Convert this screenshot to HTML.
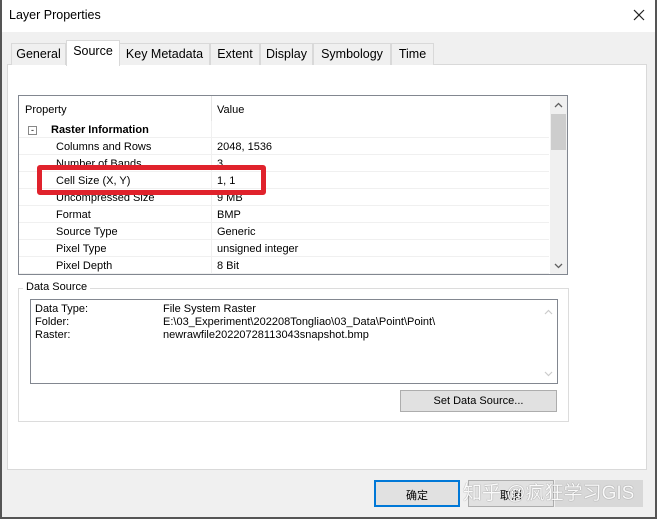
<!DOCTYPE html>
<html><head><meta charset="utf-8"><style>
*{box-sizing:border-box;margin:0;padding:0}
body{width:657px;height:519px;background:#f0f0f0;font-family:"Liberation Sans","Noto Sans CJK SC",sans-serif;font-size:11px;color:#000;position:relative;overflow:hidden}
.a{position:absolute}
.tab{position:absolute;top:43px;height:22px;border:1px solid #d9d9d9;border-bottom:none;background:#f0f0f0;font-size:12.5px;padding-top:3px;text-align:center}
.row{position:absolute;left:0;width:530px;height:17px;border-bottom:1px solid #f0f0f0}
.row span{position:absolute;top:3px}
</style></head><body>
<div class="a" style="left:0;top:0;width:657px;height:32px;background:#fff"></div>
<div class="a" style="left:9px;top:8px;font-size:12.5px">Layer Properties</div>
<svg class="a" style="left:633px;top:9px" width="12" height="12"><path d="M1 1L11 11M11 1L1 11" stroke="#222" stroke-width="1.2"/></svg>
<div class="a" style="left:0;top:0;width:2px;height:519px;background:#555"></div>
<div class="a" style="left:655px;top:0;width:2px;height:519px;background:#555"></div>
<div class="a" style="left:0;top:517px;width:657px;height:2px;background:#555"></div>

<div class="a" style="left:7px;top:64px;width:640px;height:406px;background:#fff;border:1px solid #d9d9d9"></div>
<div class="tab" style="left:11px;width:55px">General</div>
<div class="tab" style="left:119px;width:91px">Key Metadata</div>
<div class="tab" style="left:210px;width:50px">Extent</div>
<div class="tab" style="left:260px;width:53px">Display</div>
<div class="tab" style="left:313px;width:78px">Symbology</div>
<div class="tab" style="left:391px;width:43px">Time</div>
<div class="tab" style="left:66px;top:40px;width:54px;height:26px;background:#fff;border-color:#d9d9d9">Source</div>

<div class="a" style="left:18px;top:95px;width:550px;height:180px;border:1px solid #828790;background:#fff;overflow:hidden">
 <div class="a" style="left:192px;top:0;width:1px;height:25px;background:#e5e5e5"></div>
 <div class="a" style="left:6px;top:8px">Property</div>
 <div class="a" style="left:198px;top:8px">Value</div>
 <div class="a" style="left:9px;top:30px;width:9px;height:9px;border:1px solid #888;font-size:9px;line-height:6px;text-align:center">-</div>
 <div class="a" style="left:32px;top:28px;font-weight:bold">Raster Information</div>
 <div class="a" style="left:192px;top:25px;width:1px;height:155px;background:#f0f0f0"></div>
 <div class="row" style="top:25px"></div>
 <div class="row" style="top:42px"><span style="left:37px">Columns and Rows</span><span style="left:198px">2048, 1536</span></div>
 <div class="row" style="top:59px"><span style="left:37px">Number of Bands</span><span style="left:198px">3</span></div>
 <div class="row" style="top:76px"><span style="left:37px">Cell Size (X, Y)</span><span style="left:198px">1, 1</span></div>
 <div class="row" style="top:93px"><span style="left:37px">Uncompressed Size</span><span style="left:198px">9 MB</span></div>
 <div class="row" style="top:110px"><span style="left:37px">Format</span><span style="left:198px">BMP</span></div>
 <div class="row" style="top:127px"><span style="left:37px">Source Type</span><span style="left:198px">Generic</span></div>
 <div class="row" style="top:144px"><span style="left:37px">Pixel Type</span><span style="left:198px">unsigned integer</span></div>
 <div class="row" style="top:161px"><span style="left:37px">Pixel Depth</span><span style="left:198px">8 Bit</span></div>
 <div class="a" style="left:531px;top:0;width:17px;height:178px;background:#f0f0f0"></div>
 <div class="a" style="left:532px;top:18px;width:15px;height:36px;background:#cdcdcd"></div>
 <svg class="a" style="left:535px;top:6px" width="9" height="6"><path d="M1 5L4.5 1.5L8 5" stroke="#606060" stroke-width="1.3" fill="none"/></svg>
 <svg class="a" style="left:535px;top:167px" width="9" height="6"><path d="M1 1L4.5 4.5L8 1" stroke="#606060" stroke-width="1.3" fill="none"/></svg>
</div>
<div class="a" style="left:37px;top:165px;width:229px;height:30px;border:5px solid #e0222c;border-radius:3px"></div>

<div class="a" style="left:18px;top:288px;width:551px;height:134px;border:1px solid #dcdcdc"></div>
<div class="a" style="left:23px;top:281px;background:#fff;padding:0 3px">Data Source</div>
<div class="a" style="left:30px;top:299px;width:528px;height:85px;border:1px solid #828790;background:#fff;line-height:13px">
 <div class="a" style="left:4px;top:3px">Data Type:<br>Folder:<br>Raster:</div>
 <div class="a" style="left:132px;top:3px">File System Raster<br>E:\03_Experiment\202208Tongliao\03_Data\Point\Point\<br>newrawfile20220728113043snapshot.bmp</div>
 <svg class="a" style="left:513px;top:9px" width="9" height="6"><path d="M1 5L4.5 1.5L8 5" stroke="#ccc" stroke-width="1.2" fill="none"/></svg>
 <svg class="a" style="left:513px;top:71px" width="9" height="6"><path d="M1 1L4.5 4.5L8 1" stroke="#ccc" stroke-width="1.2" fill="none"/></svg>
</div>
<div class="a" style="left:400px;top:390px;width:157px;height:22px;background:#e1e1e1;border:1px solid #adadad;text-align:center;padding-top:4px">Set Data Source...</div>

<div class="a" style="left:374px;top:480px;width:86px;height:27px;background:#e1e1e1;border:2px solid #0078d7;text-align:center;padding-top:5px">确定</div>
<div class="a" style="left:468px;top:480px;width:86px;height:27px;background:#e1e1e1;border:1px solid #adadad;text-align:center;padding-top:6px">取消</div>
<div class="a" style="left:555px;top:480px;width:88px;height:27px;background:#c8c8c8;opacity:.6"></div>
<div class="a" style="left:463px;top:478px;font-size:19px;color:#fff;opacity:.85;text-shadow:0 0 1px #555">知乎 @疯狂学习GIS</div>
</body></html>
